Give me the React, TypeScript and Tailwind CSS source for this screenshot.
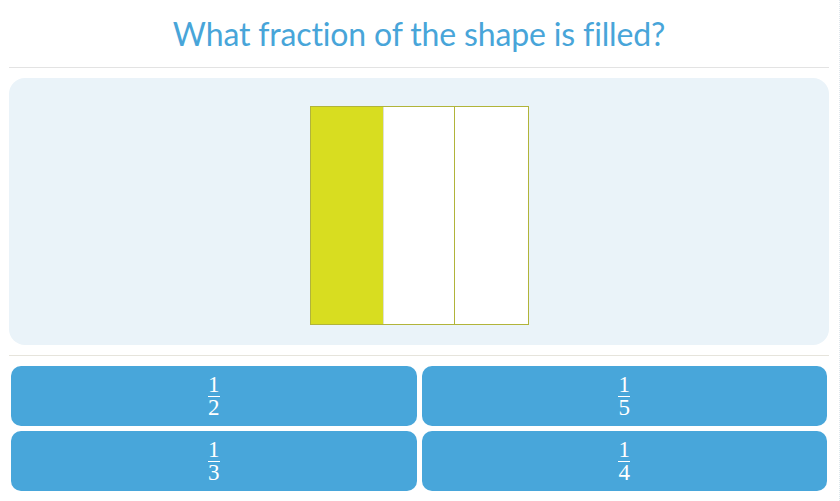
import React from "react";

function Frac({ n, d }: { n: string; d: string }) {
  return (
    <span className="flex flex-col items-center text-white" style={{ fontFamily: '"Liberation Serif", "Times New Roman", serif' }}>
      <span className="block text-[23px] leading-[22px] h-[22px]">{n}</span>
      <span className="block h-[1px] w-[12px] bg-white"></span>
      <span className="block text-[23px] leading-[22px] h-[22px]">{d}</span>
    </span>
  );
}

export default function App() {
  const answers = [
    ["1", "2"],
    ["1", "5"],
    ["1", "3"],
    ["1", "4"],
  ];
  return (
    <div className="w-[840px] h-[501px] bg-white border-r border-dotted border-[#dde6ec] pr-[1px]">
      <div className="w-[838px] pl-[9px] pr-[9px]">
        <div className="h-[67px] flex items-start justify-center pt-[14px]">
          <h1 className="text-[32px] leading-[40px] text-[#48a5d9] tracking-[-0.15px]" style={{ fontFamily: 'Lato, "Open Sans", sans-serif' }}>
            What fraction of the shape is filled?
          </h1>
        </div>
        <div className="h-[1px] bg-[#e3e3e3]"></div>
        <div className="mt-[10px] h-[267px] rounded-[16px] bg-[#eaf3f9] flex justify-center pt-[28px]">
          <div className="w-[219px] h-[219px] border-[1.5px] border-[#b1b43a] flex">
            <div className="w-[72px] h-full bg-[#d8dd20]"></div>
            <div className="w-[72px] h-full bg-white border-l border-[#dedfd2] border-r-[1.5px] border-r-[#b1b43a]"></div>
            <div className="flex-1 h-full bg-white"></div>
          </div>
        </div>
        <div className="mt-[10px] h-[1px] bg-[#e6e4dc]"></div>
        <div className="mt-[10px] px-[2px] grid grid-cols-2 gap-x-[5px] gap-y-[5px]">
          {answers.map(([n, d], i) => (
            <button key={i} className="h-[60px] rounded-[10px] bg-[#48a6da] flex items-center justify-center">
              <Frac n={n} d={d} />
            </button>
          ))}
        </div>
      </div>
    </div>
  );
}
